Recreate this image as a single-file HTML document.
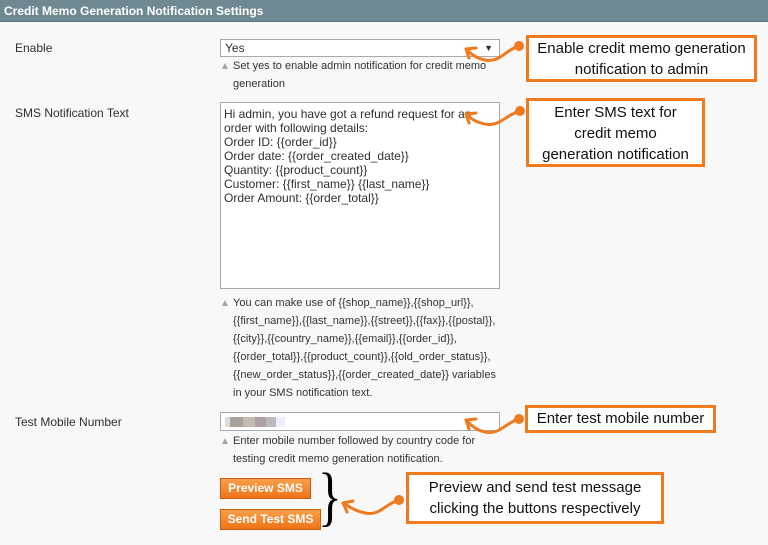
<!DOCTYPE html>
<html><head><style>
body{margin:0;width:768px;height:545px;background:#f8f8f8;font-family:"Liberation Sans",Arial,sans-serif;font-size:12px;color:#2f2f2f;position:relative;overflow:hidden}
.hd{position:absolute;left:0;top:0;width:768px;height:22px;background:#6f8992;color:#fff;font-weight:bold;font-size:12px;line-height:22px;padding-left:4px;box-sizing:border-box;border-bottom:1px solid #5d747c}
.a{position:absolute}
.lb{position:absolute;left:15px;font-size:12px}
.box{position:absolute;background:#fff;border:1px solid #aaa;box-sizing:border-box}
.hint{position:absolute;left:220px;font-size:11px;line-height:18px;color:#333;padding-left:13px}
.hint:before{content:"";position:absolute;left:2px;top:6px;border-left:3.5px solid transparent;border-right:3.5px solid transparent;border-bottom:6px solid #a0a8ab}
.btn{position:absolute;left:220px;height:21px;background:linear-gradient(#f9a04a,#f07316);border:1px solid #c85d12;color:#fff;font-weight:bold;font-size:12px;line-height:19px;text-align:center;box-sizing:border-box}
.co{position:absolute;background:#fff;border:3px solid #f07a1e;box-sizing:border-box;font-size:15px;color:#111;text-align:center;line-height:21px;white-space:nowrap}
</style></head><body>
<div class="hd">Credit Memo Generation Notification Settings</div>
<div class="lb" style="top:41px">Enable</div>
<div class="box" style="left:220px;top:39px;width:280px;height:18px;padding-left:4px;line-height:16px;font-size:12px">Yes<span style="position:absolute;right:6px;top:0;font-size:9px">▼</span></div>
<div class="hint" style="top:57px;width:260px">Set yes to enable admin notification for credit memo generation</div>
<div class="lb" style="top:106px">SMS Notification Text</div>
<div class="box" style="left:220px;top:102px;width:280px;height:187px;padding:4px 3px;font-size:12px;line-height:14px">Hi admin, you have got a refund request for an order with following details:<br>Order ID: {{order_id}}<br>Order date: {{order_created_date}}<br>Quantity: {{product_count}}<br>Customer: {{first_name}} {{last_name}}<br>Order Amount: {{order_total}}</div>
<div class="hint" style="top:294px;width:272px">You can make use of {{shop_name}},{{shop_url}}, {{first_name}},{{last_name}},{{street}},{{fax}},{{postal}}, {{city}},{{country_name}},{{email}},{{order_id}}, {{order_total}},{{product_count}},{{old_order_status}}, {{new_order_status}},{{order_created_date}} variables in your SMS notification text.</div>
<div class="lb" style="top:415px">Test Mobile Number</div>
<div class="box" style="left:220px;top:412px;width:280px;height:19px"><div class="a" style="left:4px;top:4px;width:60px;height:10px;background:linear-gradient(90deg,#ddd 0,#ddd 8%,#a9a19a 8%,#a9a19a 30%,#c4bbb0 30%,#c4bbb0 50%,#b0a0a5 50%,#b0a0a5 68%,#bbb 68%,#bbb 85%,#eef 85%)"></div></div>
<div class="hint" style="top:432px;width:260px">Enter mobile number followed by country code for testing credit memo generation notification.</div>
<div class="btn" style="top:478px;width:91px">Preview SMS</div>
<div class="btn" style="top:509px;width:101px">Send Test SMS</div>
<div class="a" style="left:318px;top:462px;font-size:66px;line-height:70px;font-family:'Liberation Serif',serif;color:#000;transform:scaleX(0.75);transform-origin:left top">}</div>
<div class="co" style="left:526px;top:35px;width:231px;height:47px">Enable credit memo generation<br>notification to admin</div>
<div class="co" style="left:526px;top:98px;width:179px;height:69px;padding-top:1px">Enter SMS text for<br>credit memo<br>generation notification</div>
<div class="co" style="left:525px;top:405px;width:191px;height:28px">Enter test mobile number</div>
<div class="co" style="left:406px;top:472px;width:258px;height:52px;padding-top:2px">Preview and send test message<br>clicking the buttons respectively</div>
<svg class="a" style="left:0;top:0" width="768" height="545" fill="none" stroke="#f07a1e" stroke-width="3" stroke-linecap="round">
<path d="M519 46 C505 50,500 63,485 60 C475 58,470 53,466 49"/><path d="M466 49 l10 -1 M466 49 l3 9"/><circle cx="519" cy="46" r="3.5" fill="#f07a1e"/>
<path d="M520 111 C505 115,500 127,485 124 C475 122,470 118,466 114"/><path d="M466 114 l10 -1 M466 114 l3 9"/><circle cx="520" cy="111" r="3.5" fill="#f07a1e"/>
<path d="M519 419 C505 423,500 435,485 432 C475 430,470 424,466 420"/><path d="M466 420 l10 -1 M466 420 l3 9"/><circle cx="519" cy="419" r="3.5" fill="#f07a1e"/>
<path d="M399 500 C385 504,380 516,365 513 C355 511,350 507,343 503"/><path d="M343 503 l10 -2 M343 503 l4 9"/><circle cx="399" cy="500" r="3.5" fill="#f07a1e"/>
</svg>
</body></html>
